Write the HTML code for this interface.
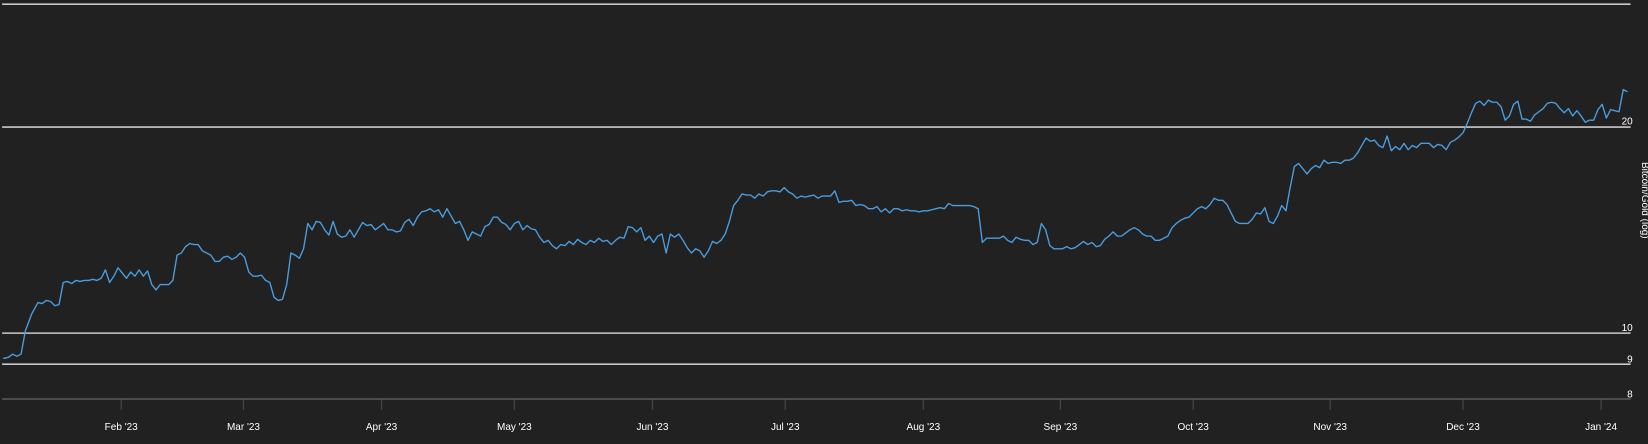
<!DOCTYPE html>
<html><head><meta charset="utf-8"><style>
html,body{margin:0;padding:0;background:#212121;overflow:hidden}
svg{display:block}
text{font-family:"Liberation Sans",sans-serif;fill:#fff;font-size:9.5px}
</style></head><body>
<svg width="1648" height="444" viewBox="0 0 1563.5 421.2" preserveAspectRatio="none">
<rect width="1564" height="422" fill="#212121"/>
<g stroke="#c9c9c9" stroke-width="1.5">
<line x1="2" y1="4" x2="1547" y2="4"/>
<line x1="2" y1="120.5" x2="1547" y2="120.5"/>
<line x1="2" y1="316" x2="1547" y2="316"/>
<line x1="2" y1="345.5" x2="1547" y2="345.5"/>
</g>
<line x1="2" y1="378.5" x2="1547" y2="378.5" stroke="#5a5a5a" stroke-width="1.5"/>
<g stroke="#444" stroke-width="1.2">
<line x1="115" y1="379" x2="115" y2="389"/><line x1="231" y1="379" x2="231" y2="389"/><line x1="362" y1="379" x2="362" y2="389"/><line x1="488" y1="379" x2="488" y2="389"/><line x1="619" y1="379" x2="619" y2="389"/><line x1="745" y1="379" x2="745" y2="389"/><line x1="876" y1="379" x2="876" y2="389"/><line x1="1006" y1="379" x2="1006" y2="389"/><line x1="1132" y1="379" x2="1132" y2="389"/><line x1="1262" y1="379" x2="1262" y2="389"/><line x1="1388" y1="379" x2="1388" y2="389"/><line x1="1519" y1="379" x2="1519" y2="389"/>
</g>
<g text-anchor="middle">
<text x="115" y="408">Feb '23</text><text x="231" y="408">Mar '23</text><text x="362" y="408">Apr '23</text><text x="488" y="408">May '23</text><text x="619" y="408">Jun '23</text><text x="745" y="408">Jul '23</text><text x="876" y="408">Aug '23</text><text x="1006" y="408">Sep '23</text><text x="1132" y="408">Oct '23</text><text x="1262" y="408">Nov '23</text><text x="1388" y="408">Dec '23</text><text x="1519" y="408">Jan '24</text>
</g>
<g text-anchor="end">
<text x="1549" y="118">20</text><text x="1549" y="314">10</text><text x="1549" y="344">9</text><text x="1549" y="377">8</text>
</g>
<text transform="translate(1558,190) rotate(90)" text-anchor="middle" font-size="8.5">Bitcoin/Gold (log)</text>
<polyline fill="none" stroke="#4a9ee0" stroke-width="1.3" stroke-linejoin="round" points="3,340 8,339 12,336 16,338 20,336 24,314 30,298 36,287 40,288 44,285 48,286 52,290 56,289 60,268 64,267 68,269 72,266 76,267 80,266 84,266 88,265 92,266 96,264 100,256 104,268 108,262 112,254 116,259 120,264 124,258 128,262 132,256 136,262 140,257 144,270 148,275 152,270 156,270 160,270 164,266 168,242 172,240 176,234 180,231 184,232 188,232 192,238 196,240 200,242 204,248 208,248 212,244 216,243 220,246 224,244 228,240 232,244 236,258 240,262 244,262 248,261 252,266 256,268 260,282 264,285 268,284 272,270 276,240 280,242 284,245 288,236 292,212 296,218 300,210 304,211 308,218 312,223 316,210 320,222 324,225 328,224 332,218 336,225 340,218 344,211 348,214 352,213 356,218 360,215 364,212 368,218 372,218 376,220 380,219 384,211 388,208 392,214 396,206 400,201 404,200 408,198 412,201 416,199 420,206 424,198 428,205 432,212 436,210 440,218 444,228 448,220 452,222 456,224 460,215 464,213 468,206 472,206 476,211 480,213 484,218 488,212 492,210 496,218 500,214 504,217 508,218 512,225 516,230 520,228 524,233 528,236 532,232 536,233 540,229 544,232 548,227 552,230 556,232 560,228 564,230 568,226 572,229 576,228 580,232 584,228 588,225 592,226 596,215 600,216 604,220 608,216 612,228 616,224 620,230 624,224 628,222 632,240 636,222 640,225 644,222 648,228 652,235 656,240 660,236 664,238 668,244 672,238 676,229 680,231 684,228 688,222 692,210 696,195 700,190 704,184 708,185 712,185 716,188 720,184 724,186 728,182 732,181 736,181 740,182 744,178 748,182 752,184 756,188 760,186 764,187 768,186 772,185 776,188 780,186 784,186 788,186 792,181 796,192 800,191 804,191 808,190 812,195 816,194 820,195 824,198 828,198 832,196 836,201 840,198 844,202 848,198 852,198 856,200 860,199 864,200 868,200 872,201 876,200 880,200 884,199 888,198 892,197 896,198 900,193 904,195 908,195 912,195 916,195 920,195 924,196 928,198 932,230 936,226 940,226 944,226 948,226 952,224 956,228 960,230 964,225 968,227 972,228 976,228 980,232 984,230 988,212 992,218 996,233 1000,236 1004,236 1008,236 1012,234 1016,236 1020,235 1024,232 1028,229 1032,232 1036,230 1040,234 1044,233 1048,227 1052,224 1056,220 1060,224 1064,224 1068,221 1072,218 1076,216 1080,218 1084,222 1088,224 1092,224 1096,228 1100,228 1104,226 1108,224 1112,216 1116,212 1120,209 1124,207 1128,206 1132,202 1136,198 1140,196 1144,198 1148,194 1152,188 1156,190 1160,190 1164,194 1168,202 1172,210 1176,212 1180,212 1184,212 1188,208 1192,202 1196,203 1200,197 1204,210 1208,212 1212,205 1216,195 1220,200 1224,178 1228,158 1232,155 1236,160 1240,165 1244,160 1248,157 1252,159 1256,152 1260,155 1264,154 1268,154 1272,155 1276,152 1280,152 1284,150 1288,145 1292,138 1296,131 1300,134 1304,133 1308,138 1312,140 1316,129 1320,143 1324,139 1328,142 1332,136 1336,142 1340,138 1344,140 1348,136 1352,136 1356,136 1360,140 1364,137 1368,138 1372,142 1376,135 1380,133 1384,130 1388,126 1392,117 1396,107 1400,98 1404,96 1408,100 1412,95 1416,97 1420,97 1424,101 1428,114 1432,110 1436,99 1440,96 1444,113 1448,113 1452,115 1456,109 1460,106 1464,103 1468,98 1472,97 1476,98 1480,103 1484,107 1488,103 1492,110 1496,105 1500,110 1504,116 1508,114 1512,114 1516,104 1520,99 1524,112 1528,104 1532,105 1536,106 1540,85 1544,87"/>
</svg>
</body></html>
